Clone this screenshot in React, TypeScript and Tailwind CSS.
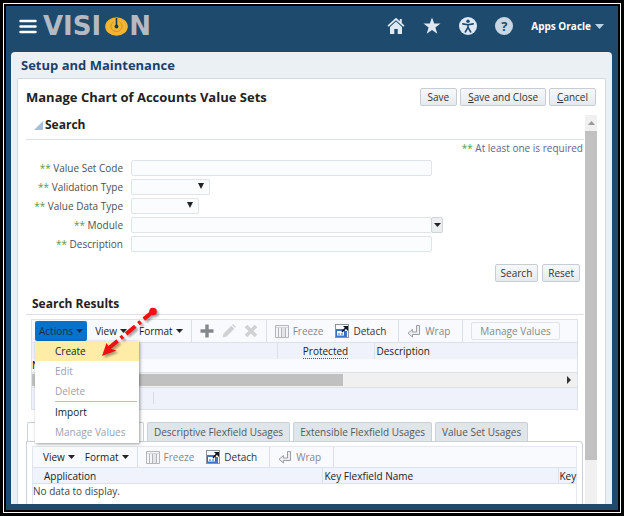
import { useState } from 'react';
import type { ReactNode } from 'react';

const resultTabs = [
    'Key Flexfield Usages',
    'Descriptive Flexfield Usages',
    'Extensible Flexfield Usages',
    'Value Set Usages',
];

const Caret = () => (
    <svg viewBox="0 0 7 4" className="w-[7px] h-1 fill-current" aria-hidden="true">
        <path d="M0 0h7L3.5 4z" />
    </svg>
);

const FreezeIcon = () => (
    <svg viewBox="0 0 14 13" className="w-3.5 h-[13px]" fill="none" stroke="#b3b6ba" aria-hidden="true">
        <path d="M.5 .5h13v12H.5z" fill="#f4f5f6" />
        <path d="M1 2.5h12" stroke="#d3d5d8" />
        <path d="M3.5 3v9M6.5 3v9M10.5 3v9" />
        <path d="M7 3h3v9H7z" fill="#e3e5e7" stroke="none" />
    </svg>
);

const DetachIcon = () => (
    <svg viewBox="0 0 14 14" className="w-3.5 h-3.5" fill="none" aria-hidden="true">
        <path d="M.5 .5h13v13H.5z" stroke="#222a35" strokeDasharray="1 1" />
        <path d="M1.5 5.5h8v7h-8z" fill="#fff" stroke="#3768b4" />
        <path d="M1 5h9v2H1zM1 11.5h11V13H1zM10 7h2v6h-2z" fill="#3f73c4" />
        <path d="M3 9h2v2H3zM6 9h2v2H6z" fill="#8fb0e0" />
        <path d="M7 8l4-4.500" stroke="#10161f" strokeWidth="1.500" />
        <path d="M8 2h5v5z" fill="#10161f" />
    </svg>
);

const WrapIcon = () => (
    <svg viewBox="0 0 14 13" className="w-3.5 h-[13px]" aria-hidden="true">
        <path
            d="M9.500.5h3v9h-7v2.500l-4.500-3.800 4.500-3.700v2.500h4z"
            fill="#eceef0"
            stroke="#9a9da1"
            strokeLinejoin="round"
        />
    </svg>
);

const Divider = () => <span className="w-px self-stretch bg-[#d9dee7]" />;

const MenuButton = ({ children, active = false, onClick }: { children: ReactNode; active?: boolean; onClick?: () => void }) => (
    <button
        onClick={onClick}
        className={
            active
                ? 'flex items-center gap-[3px] h-5 px-1 rounded-xs bg-[#0572ce] text-[#12304f]'
                : 'flex items-center gap-[3px] h-5 px-1 text-[#222]'
        }
    >
        {children}
        <Caret />
    </button>
);

const ToolButton = ({ icon, children, disabled = false }: { icon: ReactNode; children: ReactNode; disabled?: boolean }) => (
    <button disabled={disabled} className="flex items-center gap-1 pr-1 text-[#333] disabled:text-[#85888c]">
        {icon}
        {children}
    </button>
);

const PushButton = ({ children, compact = false }: { children: ReactNode; compact?: boolean }) => (
    <button
        className={`h-[18px] border border-[#c6cdd4] rounded-xs bg-linear-to-b from-[#f7f8f9] to-[#e7eaed] text-[#333] leading-4 ${compact ? 'px-[5px]' : 'px-[7px]'}`}
    >
        {children}
    </button>
);

const Field = ({ id, label, children }: { id: string; label: string; children: ReactNode }) => (
    <div className="flex items-center h-4 gap-2">
        <label htmlFor={id} className="w-[97px] shrink-0 text-right text-[#4c4f53] whitespace-nowrap">
            <span className="text-[#5c9a48]">**</span> {label}
        </label>
        {children}
    </div>
);

const SelectBox = ({ id, className }: { id: string; className: string }) => (
    <div className={`relative ${className}`}>
        <select id={id} className="block w-full h-4 appearance-none border border-[#dfe4e8] rounded-xs bg-[#fbfcfe]">
            <option></option>
        </select>
        <svg viewBox="0 0 6 6" className="absolute right-1.5 top-1 w-1.5 h-1.5 pointer-events-none" aria-hidden="true">
            <path d="M0 0h6L3 6z" fill="#222" />
        </svg>
    </div>
);

const inputClass = 'h-4 w-[301px] px-1 border border-[#dfe4e8] rounded-xs bg-[#fbfcfe]';

const Header = () => (
    <header className="flex items-center h-[46px] pl-2 pr-2 pb-1.5 text-[#dfe9f3]">
        <button aria-label="Navigator" className="w-[18px]">
            <svg viewBox="0 0 18 15" className="w-full" stroke="#fff" strokeWidth="2.500" strokeLinecap="round">
                <path d="M1.500 2h15M1.500 7.500h15M1.500 13h15" />
            </svg>
        </button>
        <div className="flex items-center ml-1.5 font-[DejaVu_Sans,sans-serif] text-[26px] leading-6 font-bold text-[#b5b9c1]">
            VISI
            <svg viewBox="0 0 23 19" className="w-[23px] h-[19px] ml-1 mr-px" aria-hidden="true">
                <ellipse cx="11.500" cy="9.500" rx="11.300" ry="9.300" fill="#f3b52f" />
                <path d="M8.500 5a5.600 5.200 0 1 0 6 0" fill="none" stroke="#c9962c" strokeWidth="1" />
                <path d="M11.500 1v8" stroke="#1e3a50" strokeWidth="1.600" />
                <circle cx="11.500" cy="9.500" r="1.900" fill="#1e3a50" />
            </svg>
            N
        </div>
        <nav className="flex items-center gap-[18px] ml-auto">
            <a href="#home" aria-label="Home">
                <svg viewBox="0 0 18 18" className="w-[18px]" fill="#dfe9f3">
                    <path d="M9 .8L.5 8.500l1.200 1.300L9 3.300l7.300 6.500 1.200-1.300-2.700-2.400V2h-2v2.300z" />
                    <path d="M9 4.600l-6 5.300V17h4.300v-5h3.400v5H15V9.900z" />
                </svg>
            </a>
            <a href="#favorites" aria-label="Favorites">
                <svg viewBox="0 0 18 18" className="w-[18px]" fill="#dfe9f3">
                    <path d="M9 .5l2.200 6h6.300l-5.100 3.900 1.900 6.300L9 12.900l-5.300 3.800 1.900-6.300L.5 6.500h6.300z" />
                </svg>
            </a>
            <a href="#accessibility" aria-label="Accessibility">
                <svg viewBox="0 0 18 18" className="w-[18px]">
                    <circle cx="9" cy="9" r="9" fill="#dfe9f3" />
                    <circle cx="9" cy="4.200" r="1.700" fill="#1e4a6d" />
                    <path
                        d="M3.800 6.900L9 7.700l5.200-.8M9 7.700v3M9 10.300l-2.700 4.700M9 10.300l2.700 4.700"
                        fill="none"
                        stroke="#1e4a6d"
                        strokeWidth="1.600"
                        strokeLinecap="round"
                    />
                </svg>
            </a>
            <button
                aria-label="Help"
                className="w-[18px] h-[18px] rounded-full bg-[#c9d7e4] text-[#1e4a6d] text-[13px] leading-[18px] font-bold"
            >
                ?
            </button>
            <button className="flex items-center gap-1 font-bold text-white">
                Apps Oracle
                <svg viewBox="0 0 9 5" className="w-[9px] h-[5px]" fill="#b9d3e8" aria-hidden="true">
                    <path d="M0 0h9L4.500 5z" />
                </svg>
            </button>
        </nav>
    </header>
);

const SearchForm = () => (
    <section>
        <h3 className="flex items-center gap-0.5 h-[25px] pl-2 pb-1 border-b border-[#dde1e5] text-xs font-bold text-[#222]">
            <svg viewBox="0 0 9 9" className="w-[9px] h-[9px]" aria-hidden="true">
                <path d="M9 0v9H0z" fill="#a9bfd4" />
            </svg>
            Search
        </h3>
        <p className="h-5 pr-px text-right text-[#5f6690]">
            <span className="text-[#5c9a48]">**</span> At least one is required
        </p>
        <div className="flex flex-col gap-[3px]">
            <Field id="code" label="Value Set Code">
                <input id="code" className={inputClass} />
            </Field>
            <Field id="validation" label="Validation Type">
                <SelectBox id="validation" className="w-[79px]" />
            </Field>
            <Field id="datatype" label="Value Data Type">
                <SelectBox id="datatype" className="w-[68px]" />
            </Field>
            <Field id="module" label="Module">
                <div className="flex">
                    <input id="module" className={inputClass} />
                    <button
                        aria-label="Show modules"
                        className="flex items-center justify-center w-3 h-4 -ml-px border border-[#cfd5da] rounded-xs bg-[#eceff1] text-[#222]"
                    >
                        <Caret />
                    </button>
                </div>
            </Field>
            <Field id="description" label="Description">
                <input id="description" className={inputClass} />
            </Field>
        </div>
        <div className="flex justify-end gap-1 mt-3 pr-1">
            <PushButton compact>Search</PushButton>
            <PushButton compact>Reset</PushButton>
        </div>
    </section>
);

const PointerArrow = () => (
    <svg
        viewBox="0 0 64 54"
        className="absolute left-[66px] top-[-16px] w-16 h-[54px] z-20 pointer-events-none drop-shadow-[2px_2px_1px_rgba(0,0,0,0.35)]"
        aria-hidden="true"
    >
        <circle cx="52" cy="6.500" r="3.800" fill="#ee1111" />
        <path d="M52 6.500L8 43" stroke="#ee1111" strokeWidth="4" strokeDasharray="12 4 3 4" fill="none" />
        <path d="M1 51l4.500-13 3.500 5.500 6.500 2z" fill="#ee1111" />
    </svg>
);

const ActionsMenu = () => (
    <ul className="absolute left-0 top-full z-10 w-[104px] pb-px bg-white shadow-[1px_1px_3px_rgba(0,0,0,0.4)] leading-5 whitespace-nowrap">
        <li className="bg-[#ffeca6]">
            <button className="w-full pl-5 text-left text-[#222]">Create</button>
        </li>
        <li>
            <button disabled className="w-full pl-5 text-left text-[#9a9fb0]">Edit</button>
        </li>
        <li>
            <button disabled className="w-full pl-5 text-left text-[#9a9fb0]">Delete</button>
        </li>
        <li className="ml-5 mr-0.5 border-t border-[#a9c2de]" />
        <li>
            <button className="w-full pl-5 text-left text-[#222]">Import</button>
        </li>
        <li>
            <button disabled className="w-full pl-5 text-left text-[#9a9fb0]">Manage Values</button>
        </li>
    </ul>
);

const SearchResults = () => {
    const [open, setOpen] = useState(true);

    return (
        <section className="mt-3">
            <h3 className="h-[21px] pl-1.5 border-b border-[#dde1e5] text-xs leading-5 font-bold text-[#222]">Search Results</h3>
            <div className="mt-1 ml-[5px] mr-1.5 border border-[#dde1ea]">
                <div className="flex items-center gap-1 h-[22px] pl-[3px] bg-[#f9fafd]">
                    <div className="relative">
                        <MenuButton active={open} onClick={() => setOpen(!open)}>Actions</MenuButton>
                        {open && <ActionsMenu />}
                        {open && <PointerArrow />}
                    </div>
                    <MenuButton>View</MenuButton>
                    <MenuButton>Format</MenuButton>
                    <div className="flex items-center self-stretch gap-2">
                        <Divider />
                        <button aria-label="Create">
                            <svg viewBox="0 0 14 14" className="w-3.5">
                                <path d="M5.300 .5h3.400v4.800h4.800v3.400H8.700v4.800H5.300V8.700H.5V5.300h4.800z" fill="#85888b" />
                            </svg>
                        </button>
                        <button aria-label="Edit" disabled>
                            <svg viewBox="0 0 14 14" className="w-3.5" fill="#cfd1d3">
                                <path d="M.5 13.500l1-4L9.300 1.700l3 3L4.500 12.500zM10 1l1-1 3 3-1 1z" />
                            </svg>
                        </button>
                        <button aria-label="Delete" disabled>
                            <svg viewBox="0 0 14 14" className="w-3.5" stroke="#cfd1d3" strokeWidth="3.600">
                                <path d="M2 2l10 10M12 2L2 12" />
                            </svg>
                        </button>
                        <Divider />
                        <ToolButton icon={<FreezeIcon />} disabled>Freeze</ToolButton>
                        <ToolButton icon={<DetachIcon />}>Detach</ToolButton>
                        <Divider />
                        <ToolButton icon={<WrapIcon />} disabled>Wrap</ToolButton>
                        <Divider />
                        <button disabled className="h-[18px] px-2 border border-[#e0e3e8] rounded-xs text-[#85888c]">
                            Manage Values
                        </button>
                    </div>
                </div>
                <table className="w-full table-fixed border-y border-[#dde1ea] text-left">
                    <thead>
                        <tr className="h-4 bg-[#eff2fa] text-[#222]">
                            <th className="w-[245px]" />
                            <th className="w-[97px] border-l border-[#dde1ea] text-center font-normal leading-3">
                                <span className="border-b border-dotted border-[#555]">Protected</span>
                            </th>
                            <th className="pl-0.5 border-l border-[#dde1ea] font-normal leading-3">Description</th>
                        </tr>
                    </thead>
                    <tbody>
                        <tr className="h-3.5 bg-[#fafbfe]">
                            <td colSpan={3} className="leading-3">No data to display.</td>
                        </tr>
                    </tbody>
                </table>
                <div className="flex items-center h-3.5 bg-[#f0f0f0]">
                    <div className="w-[57%] h-3 bg-[#c0c0c0]" />
                    <svg viewBox="0 0 4 8" className="w-1 h-2 ml-auto mr-1.5" aria-hidden="true">
                        <path d="M0 0l4 4-4 4z" fill="#333" />
                    </svg>
                </div>
                <div className="h-[22px] pl-[121px] py-1 border-t border-[#dde1ea] bg-[#f0f2fb]">
                    <div className="w-px h-3 bg-[#d5dae5]" />
                </div>
            </div>
        </section>
    );
};

const UsageTabs = () => {
    const [selected, setSelected] = useState(0);

    return (
        <section className="flex flex-col grow mt-3">
            <div role="tablist" className="flex gap-[3px] pl-px">
                {resultTabs.map((tab, i) => (
                    <button
                        key={tab}
                        role="tab"
                        aria-selected={i === selected}
                        onClick={() => setSelected(i)}
                        className={
                            i === selected
                                ? 'h-5 -mb-px px-[7px] border border-b-0 border-[#c9d1d8] rounded-t-xs bg-white font-bold text-[#7a2a10] whitespace-nowrap'
                                : 'h-5 -mb-px px-1.5 border border-[#c9d1d8] rounded-t-xs bg-[#dfe5e8] text-[#55585c] whitespace-nowrap'
                        }
                    >
                        {tab}
                    </button>
                ))}
            </div>
            <div className="grow mr-px border border-b-0 border-[#c9d1d8] rounded-tr-sm px-[5px] pt-1">
                <div className="flex flex-col h-full border border-b-0 border-[#e2e6ee]">
                    <div className="flex items-center gap-0.5 h-5 pl-1.5 bg-[#f9fafd]">
                        <MenuButton>View</MenuButton>
                        <MenuButton>Format</MenuButton>
                        <div className="flex items-center self-stretch gap-2 pl-0.5">
                            <Divider />
                            <ToolButton icon={<FreezeIcon />} disabled>Freeze</ToolButton>
                            <ToolButton icon={<DetachIcon />}>Detach</ToolButton>
                            <Divider />
                            <ToolButton icon={<WrapIcon />} disabled>Wrap</ToolButton>
                            <Divider />
                        </div>
                    </div>
                    <table className="w-full table-fixed border-t border-[#dde1ea] text-left">
                        <thead>
                            <tr className="h-4 bg-[#f0f3fb] text-[#222]">
                                <th className="pl-[11px] font-normal leading-3">Application</th>
                                <th className="w-[236px] pl-0.5 border-l border-[#dde1ea] font-normal leading-3">Key Flexfield Name</th>
                                <th className="w-[18px] pl-px border-l border-[#dde1ea] font-normal leading-3">Key</th>
                            </tr>
                        </thead>
                        <tbody>
                            <tr className="h-3.5 border-t border-[#dde1ea] text-[#444]">
                                <td colSpan={3} className="leading-3">No data to display.</td>
                            </tr>
                        </tbody>
                    </table>
                </div>
            </div>
        </section>
    );
};

const App = () => {
    return (
        <div className="flex flex-col min-h-screen p-[3px] bg-black font-[Open_Sans,Noto_Sans,sans-serif] text-[10px] leading-4">
            <div className="flex flex-col grow border border-white p-0.5">
                <div className="flex flex-col grow bg-[#1e4a6d] pl-[5px] pr-1.5 pb-1.5">
                    <Header />
                    <main className="flex flex-col grow px-1.5 rounded-t-sm bg-[#ebf0f5]">
                        <h1 className="pl-1 text-[13px] leading-[26px] font-bold text-[#1d3f6b]">Setup and Maintenance</h1>
                        <div className="flex flex-col grow pl-2 pr-2 border border-b-0 border-[#d0d9e2] rounded-t-xs bg-white">
                            <div className="flex items-center justify-between h-9">
                                <h2 className="text-[13px] font-bold text-[#222]">Manage Chart of Accounts Value Sets</h2>
                                <div className="flex gap-[3px] pr-px">
                                    <PushButton>Save</PushButton>
                                    <PushButton><u>S</u>ave and Close</PushButton>
                                    <PushButton><u>C</u>ancel</PushButton>
                                </div>
                            </div>
                            <div className="flex grow">
                                <div className="flex flex-col grow min-w-0">
                                    <SearchForm />
                                    <SearchResults />
                                    <UsageTabs />
                                </div>
                                <div className="flex flex-col items-center shrink-0 w-3 ml-px bg-[#f0f0f0]">
                                    <svg viewBox="0 0 7 4" className="w-[7px] h-1 my-1.5" aria-hidden="true">
                                        <path d="M0 4h7L3.500 0z" fill="#999" />
                                    </svg>
                                    <div className="w-full grow bg-[#c1c1c1]" />
                                    <div className="h-11" />
                                </div>
                            </div>
                        </div>
                    </main>
                </div>
            </div>
        </div>
    );
};

export default App;
